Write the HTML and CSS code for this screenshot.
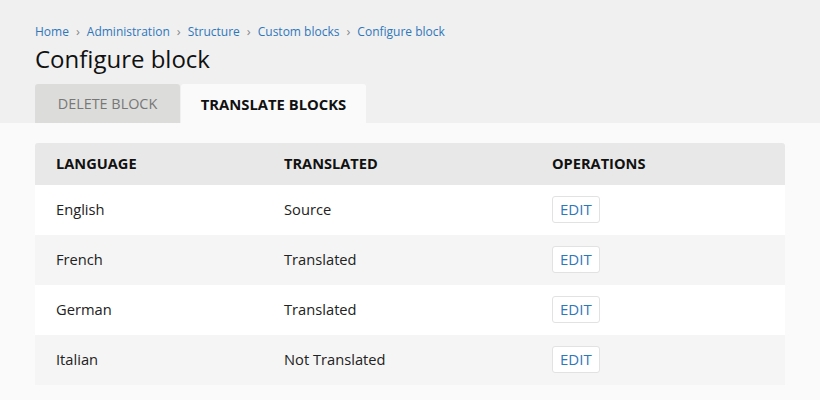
FILE: index.html
```html
<!DOCTYPE html>
<html>
<head>
<meta charset="utf-8">
<link rel="stylesheet" href="styles.css">
</head>
<body>
<header class="header">
  <nav class="breadcrumb">
    <a href="#">Home</a><span class="sep">›</span><a href="#">Administration</a><span class="sep">›</span><a href="#">Structure</a><span class="sep">›</span><a href="#">Custom blocks</a><span class="sep">›</span><a href="#">Configure block</a>
  </nav>
  <h1 class="title">Configure block</h1>
  <div class="tabs">
    <a class="tab tab-delete" href="#">Delete block</a>
    <a class="tab tab-active" href="#">Translate blocks</a>
  </div>
</header>
<main class="content">
  <table class="table">
    <colgroup><col class="c1"><col class="c2"><col class="c3"></colgroup>
    <thead>
      <tr><th>Language</th><th>Translated</th><th>Operations</th></tr>
    </thead>
    <tbody>
      <tr><td>English</td><td>Source</td><td><a class="btn" href="#">Edit</a></td></tr>
      <tr><td>French</td><td>Translated</td><td><a class="btn" href="#">Edit</a></td></tr>
      <tr><td>German</td><td>Translated</td><td><a class="btn" href="#">Edit</a></td></tr>
      <tr><td>Italian</td><td>Not Translated</td><td><a class="btn" href="#">Edit</a></td></tr>
    </tbody>
  </table>
</main>
</body>
</html>
```
FILE: styles.css
```css
* { box-sizing: border-box; }
html, body { margin: 0; padding: 0; }
body {
  font-family: "Open Sans", "DejaVu Sans", sans-serif;
  background: #fafafa;
  color: #222;
  width: 820px;
  height: 400px;
  overflow: hidden;
}
a { text-decoration: none; }
.header {
  background: #f0f0f0;
  padding: 21px 35px 0;
}
.breadcrumb {
  font-size: 12px;
  line-height: 20px;
  height: 20px;
}
.breadcrumb a { color: #2f77bb; }
.breadcrumb .sep {
  color: #888;
  margin: 0 7px;
  font-size: 13px;
}
.title {
  margin: 3px 0 10px;
  font-size: 24px;
  font-weight: 400;
  line-height: 30px;
  color: #111;
}
.tabs {
  display: flex;
  gap: 1px;
  height: 39px;
}
.tab {
  display: flex;
  align-items: center;
  justify-content: center;
  text-transform: uppercase;
  padding: 0;
  border-radius: 3px 3px 0 0;
}
.tab-delete {
  background: #dcdcdb;
  color: #777;
  width: 145px;
  font-size: 14.4px;
}
.tab-active {
  background: #fafafa;
  color: #111;
  font-weight: 700;
  font-size: 14.8px;
  width: 185px;
}
.content {
  padding: 20px 35px;
}
.table {
  width: 750px;
  border-collapse: separate;
  border-spacing: 0;
  table-layout: fixed;
}
.c1 { width: 228px; }
.c2 { width: 268px; }
.c3 { width: 254px; }
.table th {
  background: #e8e8e8;
  text-align: left;
  text-transform: uppercase;
  font-size: 14.6px;
  font-weight: 700;
  color: #111;
  height: 42px;
  padding: 0 21px 2px;
}
.table th:first-child { border-top-left-radius: 3px; }
.table th:last-child { border-top-right-radius: 3px; }
.table td {
  height: 50px;
  padding: 0 21px 2px;
  font-size: 14.7px;
  color: #222;
  background: #fff;
}
.table tbody tr:nth-child(even) td { background: #f5f5f5; }
.btn {
  display: inline-block;
  border: 1px solid #e2e2e2;
  border-radius: 3px;
  background: #fff;
  color: #2f77bb;
  text-transform: uppercase;
  font-size: 15px;
  line-height: 25px;
  padding: 0 7px;
}
```
